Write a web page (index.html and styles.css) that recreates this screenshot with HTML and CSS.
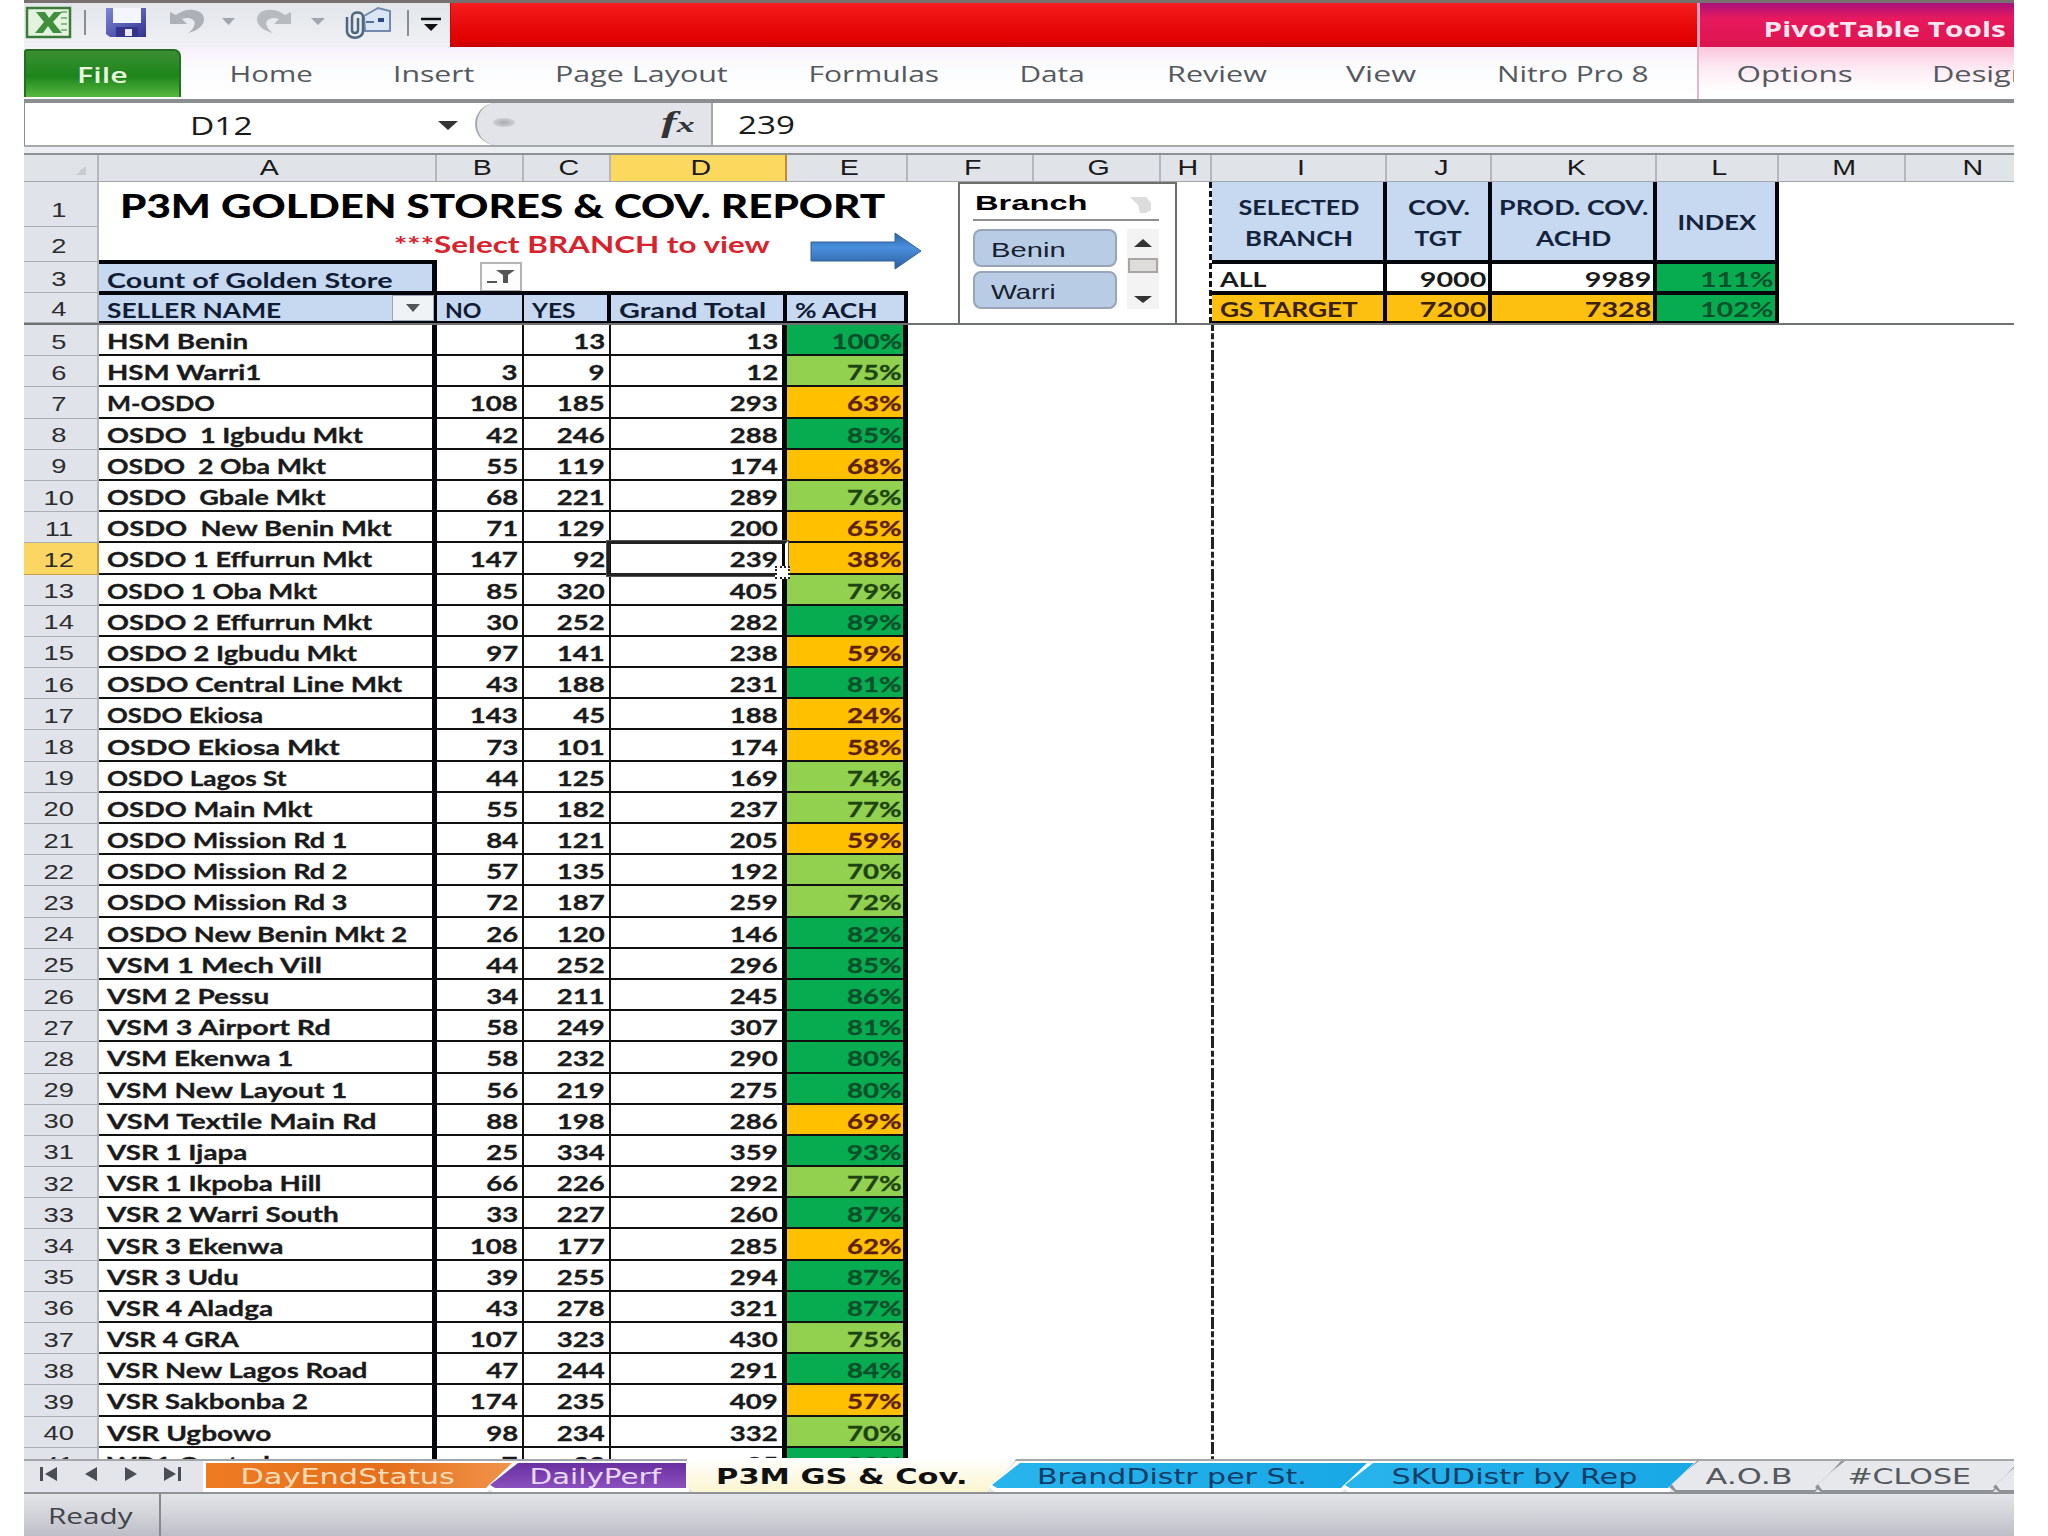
FILE: index.html
```html
<!DOCTYPE html>
<html lang="en">
<head>
  <meta charset="UTF-8" />
  <title>P3M Golden Stores &amp; Cov. Report</title>
  <link rel="stylesheet" href="styles.css">
</head>
<body>
  <div class="app">
    <div class="title-bar">
      <svg class="quick-access" width="426" height="44" viewBox="0 0 426 44">
        <defs>
          <linearGradient id="save" x1="0" y1="0" x2="1" y2="1">
            <stop offset="0" stop-color="#7d86d6" /><stop offset="1" stop-color="#34348f" />
          </linearGradient>
        </defs>
        <!-- Excel logo -->
        <rect x="3" y="5" width="43" height="29" fill="#e3f3dd" stroke="#3c7a3c" stroke-width="2.5" />
        <path d="M37 9h6M37 15h6M37 21h6M37 27h6" stroke="#8cb98a" stroke-width="2" />
        <path d="M12 9h9l4 6 5-6h8l-9 10 9 11h-9l-5-7-5 7h-8l9-11z" fill="#3f8f3c" />
        <path d="M61 7v25M384 7v26" stroke="#888d96" stroke-width="2" />
        <!-- save -->
        <path d="M82 5h40v29H86l-4-3z" fill="url(#save)" />
        <rect x="89" y="5" width="28" height="15" fill="#f4f6ff" />
        <rect x="92" y="24" width="22" height="10" fill="#34348c" />
        <rect x="101" y="26" width="7" height="7" fill="#e8eaff" />
        <!-- undo / redo -->
        <path d="M146 9v12h17l-5-5c9-3 15 2 12 7-1 3-3 5-6 7 10-2 16-8 16-14 0-10-17-13-28-4z" fill="#adb0b6" />
        <path d="M267 9v12h-17l5-5c-9-3-15 2-12 7 1 3 3 5 6 7-10-2-16-8-16-14 0-10 17-13 28-4z" fill="#b7babf" />
        <path d="M198 15h13l-6.500 7zM287 15h14l-7 7z" fill="#a2a5ab" />
        <!-- mail with clip -->
        <path d="M340 13l14-8 12 3v20h-25z" fill="#dbe6f5" stroke="#7389ad" stroke-width="2" />
        <rect x="354" y="15" width="6" height="4" fill="#2d4a87" />
        <path d="M342 19h8" stroke="#5470a2" stroke-width="2" />
        <path d="M323 14v14c0 9 16 9 16 0V14c0-6-11-6-11 0v13c0 4 6 4 6 0V15" fill="none" stroke="#4f6680" stroke-width="2.500" />
        <path d="M397 16h20" stroke="#111" stroke-width="2.500" />
        <path d="M400 21h14l-7 7z" fill="#111" />
      </svg>
      <div class="title-fill"></div>
      <div class="context-title"><span class="fit" data-w="242">PivotTable Tools</span></div>
    </div>

    <div class="ribbon-tabs">
      <div class="file-tab"><span class="fit" data-w="51">File</span></div>
      <div><span class="fit" data-w="83">Home</span></div>
      <div><span class="fit" data-w="81">Insert</span></div>
      <div><span class="fit" data-w="173">Page Layout</span></div>
      <div><span class="fit" data-w="131">Formulas</span></div>
      <div><span class="fit" data-w="65">Data</span></div>
      <div><span class="fit" data-w="100">Review</span></div>
      <div><span class="fit" data-w="70">View</span></div>
      <div><span class="fit" data-w="152">Nitro Pro 8</span></div>
      <div class="context-tab first"><span class="fit" data-w="116">Options</span></div>
      <div class="context-tab last"><span class="fit left" data-w="98">Design</span></div>
    </div>

    <div class="formula-bar">
      <div class="name-box">
        <span class="fit" data-w="63">D12</span>
        <svg class="name-arrow" width="20" height="9" viewBox="0 0 20 9"><path d="M0 0h20l-10 9z" fill="#333" /></svg>
      </div>
      <div class="formula-tools">
        <i class="knob"></i>
        <span class="fx fit right" data-w="34">f<small>x</small></span>
      </div>
      <div class="formula-value"><span class="fit left" data-w="57">239</span></div>
    </div>
    <div class="formula-gap"></div>

    <div class="cols col-heads" id="col-heads"></div>

    <div class="cols frozen">
      <div class="row-head r1"><span>1</span></div>
      <div class="row-head r2"><span>2</span></div>
      <div class="row-head r3"><span>3</span></div>
      <div class="row-head r4"><span>4</span></div>
      <div class="report-title"><span class="fit left" data-w="765">P3M GOLDEN STORES &amp; COV. REPORT</span></div>
      <div class="report-note"><span class="fit left" data-w="376">***Select BRANCH to view</span></div>
      <div class="arrow">
        <svg width="112" height="42" viewBox="0 0 112 42">
          <defs>
            <linearGradient id="blue" x1="0" y1="0" x2="0" y2="1">
              <stop offset="0" stop-color="#2f63a4" /><stop offset=".4" stop-color="#4a8fdd" /><stop offset="1" stop-color="#2c5f9e" />
            </linearGradient>
          </defs>
          <path d="M1 11h84V2l26 18-26 18v-8H1z" fill="url(#blue)" stroke="#34619a" />
        </svg>
      </div>
      <div class="pivot-head count"><span class="fit left" data-w="285">Count of Golden Store</span></div>
      <div class="filter-btn">
        <svg width="30" height="16" viewBox="0 0 30 16"><path d="M10 1h19l-7 5v8h-5V6zM1 12h10v2H1z" fill="#555" /></svg>
      </div>
      <div class="pivot-head seller">
        <span class="fit left" data-w="174">SELLER NAME</span>
        <i class="drop"><svg width="14" height="8" viewBox="0 0 14 8"><path d="M0 0h14L7 8z" fill="#555" /></svg></i>
      </div>
      <div class="pivot-head no"><span class="fit left" data-w="37">NO</span></div>
      <div class="pivot-head yes"><span class="fit left" data-w="43">YES</span></div>
      <div class="pivot-head total"><span class="fit left" data-w="147">Grand Total</span></div>
      <div class="pivot-head ach"><span class="fit left" data-w="83">% ACH</span></div>

      <div class="slicer">
        <div class="slicer-head">
          <span class="fit left" data-w="112">Branch</span>
          <svg width="24" height="18" viewBox="0 0 24 18"><path d="M1 2h16l5 6v7l-5 3h-6l-2-8z" fill="#dcdcdc" /></svg>
        </div>
        <div class="slicer-body">
          <div class="slicer-items">
            <div class="slicer-item"><span class="fit left" data-w="75">Benin</span></div>
            <div class="slicer-item"><span class="fit left" data-w="64">Warri</span></div>
          </div>
          <div class="slicer-scroll">
            <svg width="18" height="8" viewBox="0 0 18 8"><path d="M0 8h18L9 0z" fill="#333" /></svg>
            <i></i>
            <svg class="down" width="18" height="7" viewBox="0 0 18 7"><path d="M0 0h18L9 7z" fill="#333" /></svg>
          </div>
        </div>
      </div>

      <div class="cov-head ci"><span class="fit" data-w="121">SELECTED</span><span class="fit" data-w="108">BRANCH</span></div>
      <div class="cov-head cj"><span class="fit" data-w="62">COV.</span><span class="fit" data-w="47">TGT</span></div>
      <div class="cov-head ck"><span class="fit" data-w="150">PROD. COV.</span><span class="fit" data-w="75">ACHD</span></div>
      <div class="cov-head cl"><span class="fit" data-w="78">INDEX</span></div>
      <div class="cov-cell ci r3 text"><span class="fit left" data-w="47">ALL</span></div>
      <div class="cov-cell cj r3"><span class="fit right" data-w="66">9000</span></div>
      <div class="cov-cell ck r3"><span class="fit right" data-w="66">9989</span></div>
      <div class="cov-cell cl r3 high"><span class="fit right" data-w="73">111%</span></div>
      <div class="cov-cell ci r4 text target"><span class="fit left" data-w="138">GS TARGET</span></div>
      <div class="cov-cell cj r4 target"><span class="fit right" data-w="66">7200</span></div>
      <div class="cov-cell ck r4 target"><span class="fit right" data-w="66">7328</span></div>
      <div class="cov-cell cl r4 high"><span class="fit right" data-w="73">102%</span></div>
      <div class="page-break"></div>
    </div>

    <div class="data" id="data">
      <!-- Seller rows will be inserted here -->
    </div>

    <div class="sheet-bar">
      <div class="sheet-nav">
        <svg width="179" height="32" viewBox="0 0 179 32">
          <path d="M16 6h3v14h-3zM33 6v14l-12-7zM73 6v14l-12-7zM101 6v14l12-7zM140 6v14l12-7zM154 6h3v14h-3z" fill="#4a4d55" />
        </svg>
      </div>
      <div class="sheet-tab orange"><span class="fit" data-w="214">DayEndStatus</span></div>
      <div class="sheet-tab purple"><span class="fit" data-w="131">DailyPerf</span></div>
      <div class="sheet-tab active"><span class="fit" data-w="252">P3M GS &amp; Cov.</span></div>
      <div class="sheet-tab blue brand"><span class="fit" data-w="270">BrandDistr per St.</span></div>
      <div class="sheet-tab blue sku"><span class="fit" data-w="246">SKUDistr by Rep</span></div>
      <div class="sheet-tab plain aob"><span class="fit" data-w="87">A.O.B</span></div>
      <div class="sheet-tab plain close"><span class="fit" data-w="123">#CLOSE</span></div>
      <div class="sheet-tab plain more"></div>
    </div>

    <div class="status-bar"><span class="fit left" data-w="85">Ready</span></div>
  </div>

  <script>
    // name, text width, NO, YES, total, % ACH
    const sellers = [
      ['HSM Benin', 142, '', 13, 13, 100],
      ['HSM Warri1', 155, 3, 9, 12, 75],
      ['M-OSDO', 108, 108, 185, 293, 63],
      ['OSDO  1 Igbudu Mkt', 256, 42, 246, 288, 85],
      ['OSDO  2 Oba Mkt', 219, 55, 119, 174, 68],
      ['OSDO  Gbale Mkt', 219, 68, 221, 289, 76],
      ['OSDO  New Benin Mkt', 284, 71, 129, 200, 65],
      ['OSDO 1 Effurrun Mkt', 265, 147, 92, 239, 38],
      ['OSDO 1 Oba Mkt', 210, 85, 320, 405, 79],
      ['OSDO 2 Effurrun Mkt', 265, 30, 252, 282, 89],
      ['OSDO 2 Igbudu Mkt', 250, 97, 141, 238, 59],
      ['OSDO Central Line Mkt', 295, 43, 188, 231, 81],
      ['OSDO Ekiosa', 156, 143, 45, 188, 24],
      ['OSDO Ekiosa Mkt', 233, 73, 101, 174, 58],
      ['OSDO Lagos St', 179, 44, 125, 169, 74],
      ['OSDO Main Mkt', 205, 55, 182, 237, 77],
      ['OSDO Mission Rd 1', 241, 84, 121, 205, 59],
      ['OSDO Mission Rd 2', 241, 57, 135, 192, 70],
      ['OSDO Mission Rd 3', 241, 72, 187, 259, 72],
      ['OSDO New Benin Mkt 2', 300, 26, 120, 146, 82],
      ['VSM 1 Mech Vill', 215, 44, 252, 296, 85],
      ['VSM 2 Pessu', 162, 34, 211, 245, 86],
      ['VSM 3 Airport Rd', 224, 58, 249, 307, 81],
      ['VSM Ekenwa 1', 186, 58, 232, 290, 80],
      ['VSM New Layout 1', 241, 56, 219, 275, 80],
      ['VSM Textile Main Rd', 269, 88, 198, 286, 69],
      ['VSR 1 Ijapa', 140, 25, 334, 359, 93],
      ['VSR 1 Ikpoba Hill', 215, 66, 226, 292, 77],
      ['VSR 2 Warri South', 232, 33, 227, 260, 87],
      ['VSR 3 Ekenwa', 176, 108, 177, 285, 62],
      ['VSR 3 Udu', 132, 39, 255, 294, 87],
      ['VSR 4 Aladga', 166, 43, 278, 321, 87],
      ['VSR 4 GRA', 132, 107, 323, 430, 75],
      ['VSR New Lagos Road', 261, 47, 244, 291, 84],
      ['VSR Sakbonba 2', 201, 174, 235, 409, 57],
      ['VSR Ugbowo', 164, 98, 234, 332, 70],
      ['WR1 Central', 163, 7, 28, 35, 80]
    ];

    const heads = document.getElementById('col-heads');
    heads.innerHTML = '<div class="corner"></div>' + 'ABCDEFGHIJKLMN'.split('').map(c =>
      `<div class="${c === 'D' ? 'current' : ''}"><span>${c}</span></div>`).join('');

    function level(p) {
      return p >= 80 ? 'high' : p >= 70 ? 'mid' : 'low';
    }

    document.getElementById('data').innerHTML = sellers.map((s, i) => {
      const row = i + 5;
      const sel = row === 12;
      return `<div class="cols row">
        <div class="row-head ${sel ? 'current' : ''}"><span>${row}</span></div>
        <div class="name"><span class="fit left" data-w="${s[1]}">${s[0]}</span></div>
        <div class="num"><span>${s[2]}</span></div>
        <div class="num"><span>${s[3]}</span></div>
        <div class="num sum ${sel ? 'selected' : ''}"><span>${s[4]}</span></div>
        <div class="num pct ${level(s[5])}"><span>${s[5]}%</span></div>
        <div class="blank"></div>
      </div>`;
    }).join('');

    // stretch each label to its width
    document.querySelectorAll('.fit').forEach(el => {
      el.style.transform = `scaleX(${el.dataset.w / el.offsetWidth})`;
    });
  </script>
</body>
</html>
```
FILE: styles.css
```css
* {
  box-sizing: border-box;
}

body {
  margin: 0;
  background: #fff;
  color: #1a1a1a;
  font-family: "Open Sans", "Noto Sans", sans-serif;
  overflow: hidden;
}

.app {
  width: 1990px;
  height: 1536px;
  margin-left: 24px;
  display: flex;
  flex-direction: column;
  overflow: hidden;
}

.app > div {
  flex-shrink: 0;
}

.fit {
  display: inline-block;
  white-space: pre;
  transform-origin: center;
}

.fit.left {
  transform-origin: left;
}

.fit.right {
  transform-origin: right;
}

/* title bar */
.title-bar {
  height: 47px;
  display: flex;
  border-top: 3px solid #77706f;
  background: #e6e8ec;
}

.quick-access {
  background: linear-gradient(#e2e5ea, #eff1f4);
}

.title-fill {
  width: 1247px;
  background: linear-gradient(#f61c1e, #e00000 85%, #c40000);
  border-left: 1px solid #b01010;
}

.context-title {
  flex: 1;
  display: flex;
  align-items: center;
  justify-content: center;
  padding: 6px 0 0 55px;
  border-left: 3px solid #f0a0b8;
  background: linear-gradient(#a8107a, #e8195e 35%, #dc1450);
  color: #ffe6ee;
  font-size: 22px;
  font-weight: bold;
}

/* ribbon */
.ribbon-tabs {
  height: 56px;
  display: grid;
  grid-template-columns: 157px 181px 143px 273px 191px 167px 162px 166px 233px 194px 123px;
  border-bottom: 4px solid #8b8f92;
  background: linear-gradient(#f6f0fa, #fbfcfe 40%, #fff);
  color: #55585c;
  font-size: 22px;
}

.ribbon-tabs div {
  display: flex;
  align-items: center;
  justify-content: center;
  overflow: hidden;
}

.ribbon-tabs div:nth-child(9) {
  padding-right: 15px;
}

.ribbon-tabs .file-tab {
  margin: 2px 0;
  border: 2px solid #22701f;
  border-bottom: 0;
  border-radius: 3px 7px 0 0;
  background: linear-gradient(#3c8f33, #1d851b 55%, #58b83f);
  color: #e9f7e0;
  font-weight: 600;
}

.ribbon-tabs .context-tab {
  background: linear-gradient(#fbc6dc, #fdeaf3 40%, #fff 85%);
}

.context-tab.first {
  border-left: 2px solid #e3b6ca;
}

.ribbon-tabs .last {
  justify-content: flex-start;
  padding-left: 41px;
}

/* formula bar */
.formula-bar {
  height: 42px;
  display: flex;
  font-size: 25px;
  border-left: 1px solid #8b8f92;
  background: #fff;
}

.name-box {
  width: 450px;
  display: flex;
  align-items: center;
  padding: 2px 0 0 173px;
}

.name-arrow {
  margin-left: auto;
  margin-right: 17px;
}

.formula-tools {
  width: 238px;
  display: flex;
  align-items: center;
  justify-content: space-between;
  padding: 0 16px 4px 16px;
  border: 1px solid #a5a8ad;
  border-width: 0 2px 0 2px;
  border-radius: 22px 0 0 22px;
  background: #e2e4e9;
}

.knob {
  width: 22px;
  height: 9px;
  border-radius: 50%;
  background: radial-gradient(#a9abb0, #dcdee3);
}

.fx {
  font: italic bold 29px "Liberation Serif", serif;
  color: #333;
}

.fx small {
  font-size: 22px;
}

.formula-value {
  padding: 4px 0 0 25px;
}

.formula-gap {
  height: 8px;
  border-top: 2px solid #a6a9ac;
  background: #eceef1;
}

/* sheet grid */
.cols {
  display: grid;
  grid-template-columns: 75px 338px 87px 87px 176px 121px 126px 127px 51px 175px 105px 165px 122px 127px 108px;
}

.col-heads {
  height: 29px;
  border-top: 2px solid #8e9194;
  border-bottom: 1px solid #a3a6aa;
  background: #e0e3e8;
  font: 22px/26px "Liberation Sans", Arial, sans-serif;
}

.col-heads div {
  padding-left: 5px;
  border-right: 2px solid #b4b7bb;
  text-align: center;
}

.col-heads div:last-child {
  padding-left: 26px;
  border-right: 0;
}

.col-heads span,
.row-head span {
  display: inline-block;
  transform: scaleX(1.3);
}

.col-heads .current {
  background: #fcd85e;
  border-right: 2px solid #c08b2c;
}

.col-heads .corner {
  background: linear-gradient(135deg, transparent 50%, #c9cbd0 50%) no-repeat 50px 12px / 12px 8px;
}

.row-head {
  display: flex;
  align-items: center;
  justify-content: center;
  padding: 2px 4px 0 0;
  border-right: 2px solid #b4b7bb;
  border-bottom: 1px solid #abaeb3;
  background: #e0e3ea;
  color: #2d2d2d;
  font: 21px/1 "Liberation Sans", Arial, sans-serif;
}

.row-head.current {
  background: #fcd663;
  border-color: #c9a040;
}

.frozen {
  height: 143px;
  grid-template-rows: 45px 35px 31px 30px;
  border-bottom: 2px solid #6f7173;
  font: bold 20px/1 Lato, "Open Sans", sans-serif;
}

.row-head.r1 {
  grid-area: 1 / 1;
  padding-top: 10px;
}

.row-head.r2 {
  grid-area: 2 / 1;
}

.row-head.r3,
.row-head.r4 {
  grid-column: 1;
}

.r3 {
  grid-row: 3;
}

.r4 {
  grid-row: 4;
}

.report-title {
  grid-area: 1 / 2 / 2 / 7;
  padding: 8px 0 0 21px;
  font-size: 32px;
  font-weight: 900;
  color: #000;
}

.report-note {
  grid-area: 2 / 2 / 3 / 7;
  padding: 6px 0 0 295px;
  font-size: 23px;
  color: #d9222c;
}

.arrow {
  grid-area: 2 / 6 / 4 / 8;
  padding: 4px 0 0 23px;
}

.pivot-head {
  display: flex;
  align-items: center;
  margin-top: -2px;
  padding: 3px 0 0 8px;
  border: solid #05060c;
  border-width: 4px 2px 2px 0;
  background: #c6d9f1;
  color: #101c33;
  grid-row: 4;
}

.pivot-head.count {
  grid-area: 3 / 2;
  border-width: 4px 5px 0 0;
}

.pivot-head.seller {
  grid-column: 2;
  border-right-width: 3px;
}

.pivot-head.total,
.pivot-head.ach,
.pivot-head.yes {
  border-right-width: 4px;
}

.drop {
  width: 42px;
  height: 26px;
  margin: -3px 0 0 auto;
  display: flex;
  align-items: center;
  justify-content: center;
  border: 1px solid #9da9bb;
  background: #eff3f6;
}

.filter-btn {
  grid-area: 3 / 3;
  width: 42px;
  height: 30px;
  margin-left: 43px;
  display: flex;
  align-items: center;
  justify-content: center;
  border: 2px solid #b5b5b5;
  background: #fdfdfd;
}

.slicer {
  grid-area: 1 / 7 / 5 / 9;
  width: 219px;
  margin-left: 50px;
  padding: 5px 16px 0 13px;
  border: 2px solid #6e6e6e;
  border-bottom: 0;
  background: #fff;
  font: 21px/1 "Liberation Sans", Arial, sans-serif;
  color: #16202e;
}

.slicer-head {
  height: 32px;
  display: flex;
  justify-content: space-between;
  padding: 3px 6px 0 2px;
  border-bottom: 2px solid #8f8f8f;
  font-weight: bold;
  color: #000;
}

.slicer-head svg {
  margin-top: 3px;
}

.slicer-body {
  display: flex;
  justify-content: space-between;
  padding-top: 8px;
}

.slicer-items {
  display: flex;
  flex-direction: column;
  gap: 4px;
}

.slicer-item {
  width: 144px;
  height: 38px;
  padding: 8px 0 0 16px;
  border: 2px solid #98a5b8;
  border-radius: 8px;
  background: #b9cce6;
}

.slicer-scroll {
  width: 32px;
  display: flex;
  flex-direction: column;
  align-items: center;
  padding-top: 10px;
  background: #f4f3f3;
}

.slicer-scroll i {
  width: 30px;
  height: 15px;
  margin-top: 11px;
  border: 2px solid #aaa5a5;
  background: #dfdcdc;
}

.slicer-scroll .down {
  margin-top: 23px;
}

.ci {
  grid-column: 10;
}

.cj {
  grid-column: 11;
}

.ck {
  grid-column: 12;
}

.cl {
  grid-column: 13;
}

.cov-head {
  grid-row: 1 / 3;
  display: flex;
  flex-direction: column;
  align-items: center;
  justify-content: center;
  gap: 11px;
  border: solid #05060c;
  border-width: 0 4px 2px 0;
  background: #c6d9f1;
  color: #14233c;
  padding: 2px 0 0 2px;
}

.cov-cell {
  display: flex;
  align-items: center;
  justify-content: flex-end;
  padding: 2px 2px 0 8px;
  border: solid #05060c;
  border-width: 2px 4px 2px 0;
  background: #fff;
}

.cov-cell.text {
  justify-content: flex-start;
}

.cov-cell.target {
  background: #fdc010;
  color: #3a2105;
}

.page-break {
  grid-area: 1 / 9 / 5 / 10;
  border-right: 3px dashed #111;
}

.high {
  background: #07ac51 !important;
  color: #07502a;
}

.mid {
  background: #92d050;
  color: #1d4410;
}

.low {
  background: #ffc000;
  color: #5e2005;
}

/* data rows */
.data {
  height: 1134px;
  overflow: hidden;
  font: bold 20px/1 Lato, "Open Sans", sans-serif;
  -webkit-text-stroke: 0.3px;
}

.row {
  height: 31.19px;
}

.data .row-head {
  -webkit-text-stroke: 0;
}

.name,
.num {
  display: flex;
  align-items: center;
  padding-top: 3px;
  border-bottom: 2px solid #111;
}

.name {
  padding-left: 8px;
  border-right: 5px solid #05060c;
}

.num {
  justify-content: flex-end;
  padding-right: 4px;
  border-right: 2px solid #111;
}

.num span {
  display: inline-block;
  transform: scaleX(1.38);
  transform-origin: right;
}

.sum,
.pct {
  border-right: 5px solid #05060c;
}

.pct {
  padding-right: 1px;
}

.selected {
  position: relative;
}

.selected::before {
  content: "";
  position: absolute;
  inset: -2px -6px -3px -4px;
  border: 3px solid #222;
  border-right-color: #fff;
  outline: 1px solid #555;
}

.selected::after {
  content: "";
  position: absolute;
  right: -8px;
  bottom: -6px;
  width: 11px;
  height: 9px;
  border: 2px dotted #222;
  background: #fff;
}

.blank {
  grid-column: 7 / 10;
  margin-right: -2px;
  border-right: 3px dashed #222;
}

/* sheet tabs */
.sheet-bar {
  height: 35px;
  display: flex;
  border-top: 2px solid #a3a6aa;
  border-bottom: 2px solid #8f9296;
  background: #e3e5ea;
  font: 22px/27px "DejaVu Sans", Verdana, sans-serif;
}

.sheet-bar > div {
  flex-shrink: 0;
}

.sheet-nav {
  width: 179px;
}

.sheet-tab {
  position: relative;
  display: flex;
  align-items: center;
  justify-content: center;
  margin-right: -28px;
  background: #fff;
  clip-path: polygon(28px 0, 100% 0, calc(100% - 28px) 100%, 6px 100%, 0 26px);
}

.sheet-tab::before {
  content: "";
  position: absolute;
  inset: 2px 3px 4px 3px;
  clip-path: polygon(28px 0, 100% 0, calc(100% - 26px) 100%, 5px 100%, 0 22px);
}

.sheet-tab span {
  position: relative;
}

.orange {
  width: 312px;
  padding-right: 22px;
  color: #ffdcb8;
  clip-path: polygon(0 0, 100% 0, calc(100% - 28px) 100%, 0 100%);
}

.orange::before {
  background: linear-gradient(90deg, #ee7a22, #e5701c 60%, #f0944c);
  clip-path: polygon(0 0, 100% 0, calc(100% - 26px) 100%, 0 100%);
}

.purple {
  width: 202px;
  color: #e9d9ff;
  padding-left: 14px;
  clip-path: polygon(28px 0, 100% 0, 100% 100%, 6px 100%, 0 26px);
}

.purple::before {
  background: linear-gradient(#6a2fa0, #8a50bd);
  clip-path: polygon(28px 0, 100% 0, 100% 100%, 5px 100%, 0 22px);
}

.sheet-tab.active {
  width: 330px;
  margin-top: -3px;
  margin-left: 26px;
  padding: 3px 20px 0 0;
  font-weight: bold;
  color: #111;
  background: linear-gradient(#fff, #fbf5cf);
  clip-path: polygon(0 0, 100% 0, calc(100% - 30px) 100%, 6px 100%, 0 28px);
}

.blue::before {
  background: linear-gradient(90deg, #28b4ec, #18a8e6);
}

.blue {
  color: #123c66;
}

.brand {
  width: 381px;
  padding-right: 16px;
}

.sku {
  width: 355px;
  padding-right: 11px;
}

.plain {
  color: #55585c;
  background: #8e9196;
}

.plain::before {
  inset: 0 2px 2px 2px;
  background: #e6e8ec;
}

.aob {
  width: 174px;
  padding-right: 13px;
}

.close {
  width: 206px;
  padding-right: 17px;
}

.more {
  width: 100px;
}

.status-bar {
  height: 42px;
  padding: 6px 0 0 24px;
  background: linear-gradient(90deg, transparent 135px, #85888d 135px, #85888d 137px, transparent 137px),
    linear-gradient(#e3e4e8, #d2d3d9 50%, #bdbdc7);
  font-size: 22px;
  line-height: 30px;
  color: #404348;
}
```
